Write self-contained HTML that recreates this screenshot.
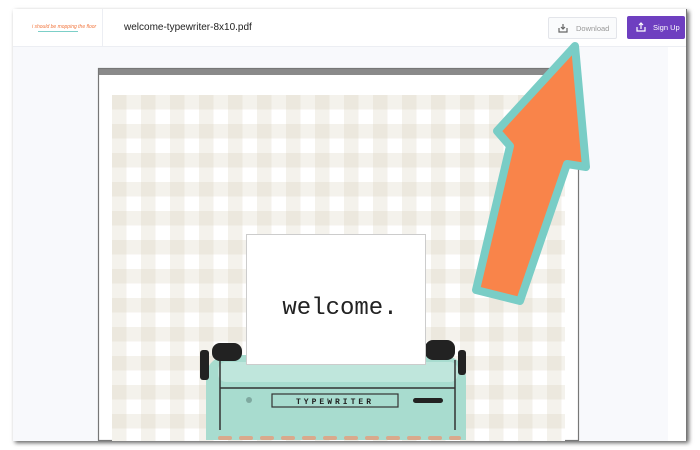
<!DOCTYPE html>
<html><head><style>
*{margin:0;padding:0;box-sizing:border-box}
body{width:700px;height:450px;background:#fff;position:relative;overflow:hidden;font-family:"Liberation Sans",sans-serif}
.win{position:absolute;left:13px;top:9px;width:674px;height:432px;background:#f8f9fc;box-shadow:2px 2px 4px rgba(0,0,0,.6);border-right:1px solid #777;overflow:hidden}
.hdr{position:absolute;left:0;top:0;width:674px;height:38px;background:#fff;border-bottom:1px solid #eceef3}
.div{position:absolute;left:89px;top:0;width:1px;height:38px;background:#eceef3}
.title{position:absolute;left:111px;top:13px;font-size:10px;color:#222}
.dl{position:absolute;left:535px;top:8px;width:69px;height:22px;border:1px solid #e3e5ea;border-radius:2px;background:#fafbfc;font-size:7.5px;color:#999;padding:6px 0 0 27px}
.su{position:absolute;left:614px;top:7px;width:58px;height:23px;background:#6e3fc0;border-radius:2px;font-size:7.5px;color:#fff;padding:7px 0 0 26px;white-space:nowrap}
.rs{position:absolute;left:655px;top:38px;width:19px;height:400px;background:#fff}
</style></head><body>
<div class="win">
<div class="hdr">
 <div style="position:absolute;left:19px;top:15px;font-size:5px;color:#f2773f;font-style:italic">i should be mopping the floor</div>
 <div style="position:absolute;left:25px;top:22px;width:40px;height:1px;background:#7ccfc8"></div>
 <div class="div"></div>
 <div class="title">welcome-typewriter-8x10.pdf</div>
 <div class="dl"><svg style="position:absolute;left:9px;top:5px" width="10" height="10" viewBox="0 0 10 10" fill="none" stroke="#666" stroke-width="1.2"><path d="M1 5v4h8V5M5 1v5M3 4l2 2 2-2"/></svg>Download</div>
 <div class="su"><svg style="position:absolute;left:9px;top:6px" width="10" height="10" viewBox="0 0 10 10" fill="none" stroke="#fff" stroke-width="1.2"><path d="M1 5v4h8V5M5 7V1M3 3l2-2 2 2"/></svg>Sign Up</div>
</div>
<div class="rs"></div>
</div>
<svg style="position:absolute;left:0;top:0" width="700" height="450">
 <defs><pattern id="g" x="112" y="95" width="29" height="29" patternUnits="userSpaceOnUse">
  <rect width="29" height="29" fill="#fff"/>
  <rect width="14.5" height="29" fill="#f4f2ec"/>
  <rect width="29" height="14.5" fill="#f4f2ec"/>
  <rect width="14.5" height="14.5" fill="#ece8de"/>
 </pattern></defs>
 <rect x="98" y="68" width="481" height="373" fill="#fff"/>
 <rect x="98" y="68" width="481" height="7" fill="#8a8a8a"/>
 <rect x="98.5" y="68.5" width="480" height="372" fill="none" stroke="#777" stroke-width="1.2"/>
 <rect x="112" y="95" width="453" height="346" fill="url(#g)"/>
 <path d="M206 440 L206 378 Q206 360 225 355 L445 355 Q466 360 466 378 L466 440 Z" fill="#a8dccf"/>
 <rect x="218" y="362" width="240" height="20" rx="8" fill="#bfe6dc"/>
 <path d="M220 360 L220 430 M455 360 L455 430 M220 388 L455 388" stroke="#333" stroke-width="1.5" fill="none"/>
 <rect x="200" y="350" width="9" height="30" rx="3" fill="#222"/>
 <rect x="458" y="350" width="8" height="25" rx="3" fill="#222"/>
 <rect x="212" y="343" width="30" height="18" rx="8" fill="#222"/>
 <rect x="425" y="340" width="30" height="20" rx="8" fill="#222"/>
 <rect x="272" y="394" width="126" height="13" fill="none" stroke="#333" stroke-width="1.2"/>
 <text x="335" y="404" font-family="Liberation Mono" font-weight="bold" font-size="8" fill="#222" text-anchor="middle" letter-spacing="3">TYPEWRITER</text>
 <rect x="413" y="398" width="30" height="5" rx="2.5" fill="#222"/>
 <circle cx="249" cy="400" r="3" fill="#7fa9a0"/>
 <g fill="#d9a98c"><rect x="218" y="436" width="14" height="4" rx="2"/><rect x="239" y="436" width="14" height="4" rx="2"/><rect x="260" y="436" width="14" height="4" rx="2"/><rect x="281" y="436" width="14" height="4" rx="2"/><rect x="302" y="436" width="14" height="4" rx="2"/><rect x="323" y="436" width="14" height="4" rx="2"/><rect x="344" y="436" width="14" height="4" rx="2"/><rect x="365" y="436" width="14" height="4" rx="2"/><rect x="386" y="436" width="14" height="4" rx="2"/><rect x="407" y="436" width="14" height="4" rx="2"/><rect x="428" y="436" width="14" height="4" rx="2"/><rect x="449" y="436" width="12" height="4" rx="2"/></g>
 <rect x="246.5" y="234.5" width="179" height="130" fill="#fff" stroke="#ccc"/>
 <text x="340" y="314" font-family="Liberation Mono" font-size="24" fill="#222" text-anchor="middle">welcome.</text>
 <path d="M575 46 L497 131 L510 146 L476 290 L520 301 L567 164 L586 167 Z" fill="#f9844a" stroke="#79cdc6" stroke-width="8" stroke-linejoin="round"/>
</svg>
</body></html>
